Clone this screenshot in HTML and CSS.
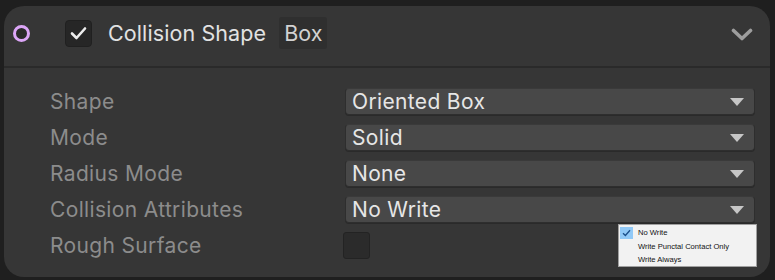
FILE: index.html
```html
<!DOCTYPE html>
<html>
<head>
<meta charset="utf-8">
<link rel="stylesheet" href="styles.css">
</head>
<body>
<div class="card">
  <div class="header">
    <span class="dot"></span>
    <span class="check">
      <svg width="17" height="14" viewBox="0 0 17 14"><path d="M2 7.5 L6.5 12 L15 2.5" fill="none" stroke="#ececec" stroke-width="2.6" stroke-linecap="round" stroke-linejoin="round"/></svg>
    </span>
    <span class="title">Collision Shape</span>
    <span class="tag">Box</span>
    <span class="chev">
      <svg width="22" height="14" viewBox="0 0 22 14"><path d="M2.5 2.5 L11 10.5 L19.5 2.5" fill="none" stroke="#9e9e9e" stroke-width="3.6" stroke-linecap="round" stroke-linejoin="round"/></svg>
    </span>
  </div>
  <div class="body">
    <div class="row"><span class="label">Shape</span><div class="select"><span>Oriented Box</span><i class="tri"></i></div></div>
    <div class="row"><span class="label">Mode</span><div class="select"><span>Solid</span><i class="tri"></i></div></div>
    <div class="row"><span class="label">Radius Mode</span><div class="select"><span>None</span><i class="tri"></i></div></div>
    <div class="row"><span class="label">Collision Attributes</span><div class="select"><span>No Write</span><i class="tri"></i></div></div>
    <div class="row"><span class="label">Rough Surface</span><div><span class="box"></span></div></div>
  </div>
  <div class="menu">
    <div class="item sel"><span class="mk"><svg width="9" height="8" viewBox="0 0 9 8"><path d="M1 4.2 L3.4 6.5 L8 1.2" fill="none" stroke="#1b4f8a" stroke-width="1.3"/></svg></span>No Write</div>
    <div class="item"><span class="mk"></span>Write Punctal Contact Only</div>
    <div class="item"><span class="mk"></span>Write Always</div>
  </div>
</div>
</body>
</html>
```
FILE: styles.css
```css
html, body { margin: 0; padding: 0; }
body {
  background: #1f1f1f;
  width: 775px;
  height: 280px;
  overflow: hidden;
  font-family: "Inter", "Noto Sans", sans-serif;
}
.card {
  position: relative;
  margin: 6px 5px 0 4px;
  height: 271px;
  background: #363636;
  border-radius: 20px 20px 20px 20px;
  box-sizing: border-box;
}
.header {
  height: 62px;
  box-sizing: border-box;
  border-bottom: 2px solid #2a2a2a;
  display: flex;
  align-items: center;
  padding: 0 0 6px 9px;
}
.dot {
  width: 11px;
  height: 11px;
  border: 3px solid #dca6f7;
  border-radius: 50%;
  background: #2a2a2a;
  flex: none;
}
.check {
  margin-left: 35px;
  width: 27px;
  height: 27px;
  border-radius: 4px;
  background: #262626;
  border: 1px solid #202020;
  box-sizing: border-box;
  display: flex;
  align-items: center;
  justify-content: center;
}
.title {
  margin-left: 16px;
  color: #e2e2e2;
  font-size: 21.5px;
  letter-spacing: 0.1px;
}
.tag {
  margin-left: 13px;
  background: #2f2f2f;
  color: #d2d2d2;
  font-size: 21.5px;
  height: 32px;
  line-height: 32px;
  padding: 0 5px;
  border-radius: 3px;
}
.chev {
  margin-left: auto;
  margin-right: 17px;
  margin-top: 4px;
  display: flex;
}
.body {
  padding: 20px 15px 0 46px;
  display: flex;
  flex-direction: column;
  gap: 9px;
}
.row {
  display: grid;
  grid-template-columns: 295px 1fr;
  align-items: center;
  height: 27px;
}
.label {
  color: #8c8c8c;
  font-size: 21px;
  letter-spacing: 0.35px;
}
.select {
  height: 27px;
  box-sizing: border-box;
  background: #484848;
  border: 1px solid #2e2e2e;
  border-top-color: #3a3a3a;
  border-radius: 4px;
  box-shadow: 0 1px 0 #2a2a2a;
  display: flex;
  align-items: center;
  padding: 0 10px 0 6px;
  color: #e6e6e6;
  font-size: 21px;
  letter-spacing: 0.35px;
}
.select span { flex: 1; }
.tri {
  width: 0;
  height: 0;
  border-left: 7px solid transparent;
  border-right: 7px solid transparent;
  border-top: 8px solid #c6c6c6;
}
.box {
  display: block;
  margin-left: -2px;
  width: 27px;
  height: 27px;
  box-sizing: border-box;
  background: #2b2b2b;
  border: 1px solid #232323;
  border-radius: 3px;
}
.menu {
  position: absolute;
  left: 614px;
  top: 218px;
  width: 139px;
  height: 43px;
  box-sizing: border-box;
  background: #f2f2f2;
  border: 1px solid #a0a0a0;
  padding: 1px 0 0 1px;
  font-family: "Liberation Sans", Arial, sans-serif;
  font-size: 7.6px;
  color: #111;
}
.item {
  height: 13.5px;
  display: flex;
  align-items: center;
}
.mk {
  width: 13px;
  height: 12px;
  margin-right: 5px;
  display: flex;
  align-items: center;
  justify-content: center;
}
.sel .mk { background: #91c9f7; }
```
